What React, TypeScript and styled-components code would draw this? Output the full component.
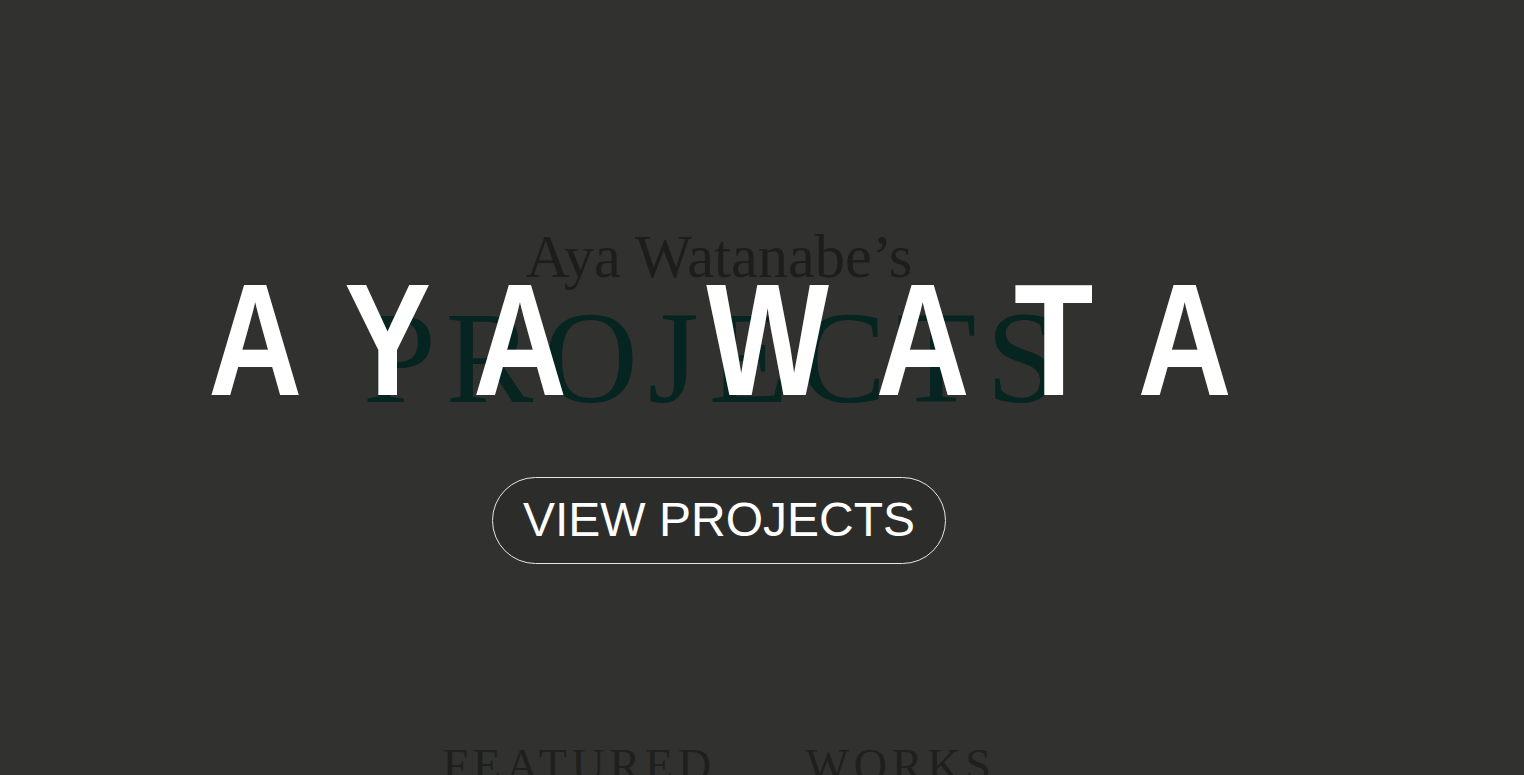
import React from "react";
import styled, { createGlobalStyle } from "styled-components";

const GlobalStyle = createGlobalStyle`
  html, body {
    margin: 0;
    padding: 0;
    background: #31312f;
    overflow: hidden;
  }
`;

const Page = styled.div`
  position: relative;
  height: 775px;
  padding-right: 86px;
  background: #31312f;
  overflow: hidden;
`;

const Hero = styled.section`
  display: flex;
  flex-direction: column;
  align-items: center;
  padding-top: 227px;
`;

const Subtitle = styled.h2`
  margin: 0;
  font-family: "Liberation Serif", "Times New Roman", serif;
  font-weight: 400;
  font-size: 60.5px;
  line-height: 1;
  letter-spacing: 0;
  color: #1d1d1c;
`;

const Title = styled.h1`
  margin: 4px 0 0;
  padding-right: 6px;
  font-family: "Liberation Serif", "Times New Roman", serif;
  font-weight: 400;
  font-size: 131px;
  line-height: 1;
  letter-spacing: 10px;
  color: #062420;
`;

const PillButton = styled.button`
  margin-top: 54px;
  width: 454px;
  height: 87px;
  box-sizing: border-box;
  border: 1px solid #e6e6e6;
  border-radius: 44px;
  background: #2c2c2a;
  color: #ffffff;
  font-family: "Liberation Sans", Arial, sans-serif;
  font-size: 48px;
  line-height: 1;
  padding: 0;
  cursor: pointer;
`;

const SectionHeading = styled.h3`
  margin: 179px 0 0;
  font-family: "Liberation Serif", "Times New Roman", serif;
  font-weight: 400;
  font-size: 46px;
  line-height: 1;
  letter-spacing: 4.8px;
  word-spacing: 74px;
  color: #1f1f1e;
`;

// name reveal laid over the hero while the page loads
const Overlay = styled.div`
  position: absolute;
  top: 0;
  left: 0;
  right: 86px;
  display: flex;
  justify-content: center;
  padding-top: 285px;
  pointer-events: none;
`;

const Reveal = styled.div`
  padding-left: 56px;
  font-family: "Liberation Sans", Arial, sans-serif;
  font-weight: 700;
  font-size: 130px;
  line-height: 1;
  letter-spacing: 54px;
  white-space: pre;
  color: #ffffff;
  transform: scaleY(1.23);
  transform-origin: 50% 110px;
`;

export default function App() {
  return (
    <Page>
      <GlobalStyle />
      <Hero>
        <Subtitle>Aya Watanabe’s</Subtitle>
        <Title>PROJECTS</Title>
        <PillButton>VIEW PROJECTS</PillButton>
        <SectionHeading>FEATURED WORKS</SectionHeading>
      </Hero>
      <Overlay>
        <Reveal>AYA WATA</Reveal>
      </Overlay>
    </Page>
  );
}
